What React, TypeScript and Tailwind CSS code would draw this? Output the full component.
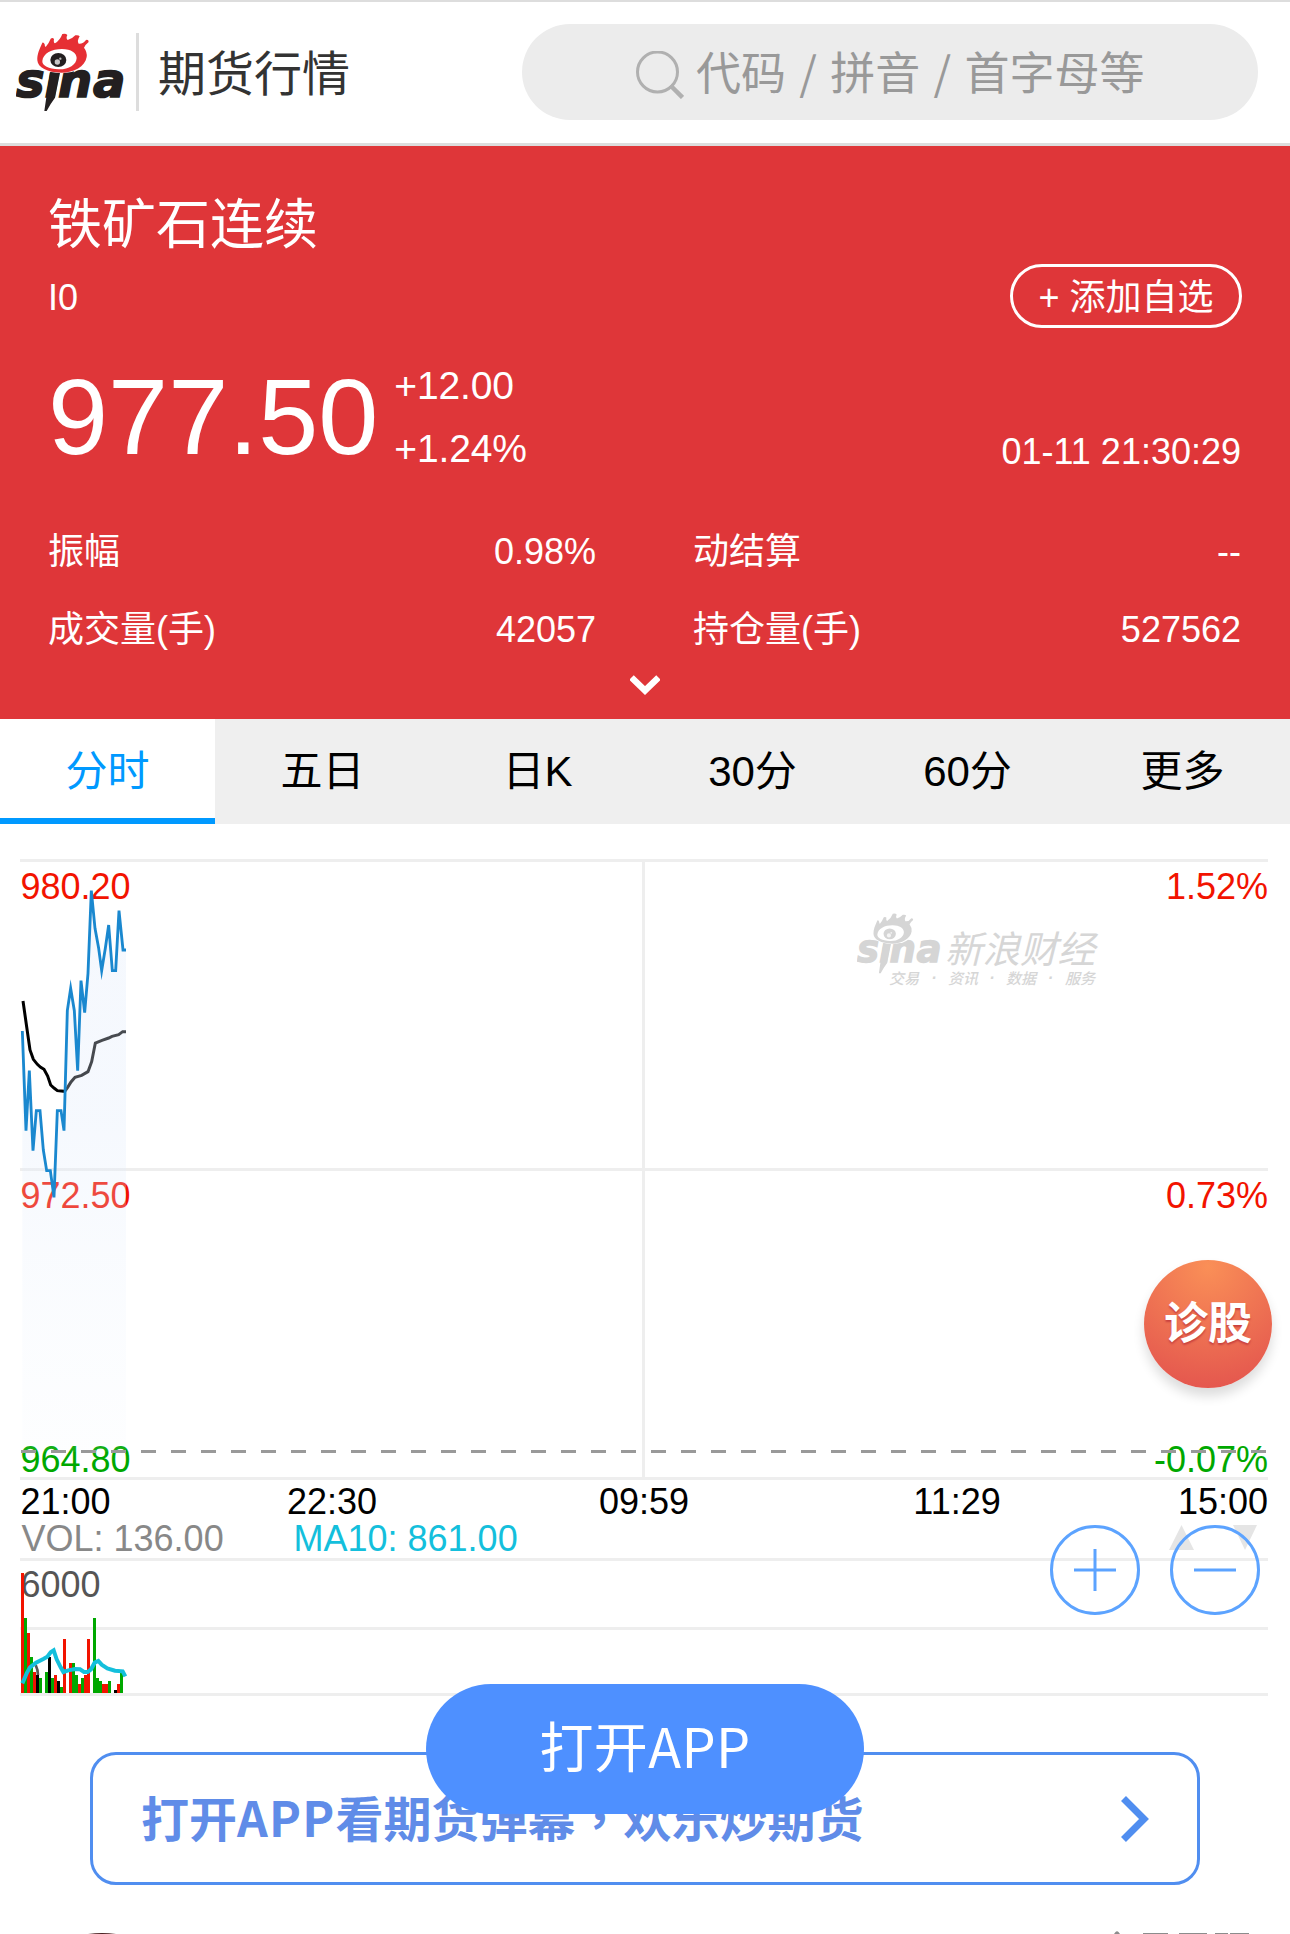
import React from "react";

const SANS = "font-['Liberation_Sans','Noto_Sans_CJK_SC',sans-serif]";

function SinaLogo({ ink, flame, className }: { ink: string; flame: string; className: string }) {
  return (
    <svg viewBox="48 96 330 237" className={className} aria-label="sina">
      <text
        y="287"
        fontSize="144"
        fontWeight="bold"
        fontStyle="italic"
        fontFamily="DejaVu Sans, sans-serif"
        fill={ink}
        stroke={ink}
        strokeWidth="5"
      >
        <tspan x="48">s</tspan>
        <tspan x="134" fontSize="132">i</tspan>
        <tspan x="174">n</tspan>
        <tspan x="279">a</tspan>
      </text>
      <path d="M150 214 L181 210 L165 290 Q150 310 140 330 L133 330 Z" fill={ink} />
      <ellipse cx="184" cy="173" rx="80" ry="43" fill="#fff" />
      <path
        fill={flame}
        d="M112 178 C111 160 118 145 127 125 Q131 123 134 130 Q134 138 137 138 Q146 128 152 113 Q158 109 162 114 Q160 126 165 127 Q180 118 187 99 Q197 96 202 102 Q197 112 203 117 Q216 114 226 103 Q235 101 239 106 Q230 120 236 128 Q250 129 258 117 Q266 115 266 123 Q257 130 252 140 Q262 153 260 168 C255 197 222 215 184 215 C142 215 113 199 112 178 Z"
      />
      <path d="M127 180 C129 157 156 144 186 144 C214 144 230 156 230 171 C229 192 205 206 176 205 C146 204 126 194 127 180 Z" fill="#fff" />
      <ellipse cx="175" cy="177" rx="24" ry="21" fill={ink} />
      <circle cx="172" cy="183" r="8" fill="#fff" fillOpacity="0.75" />
      <circle cx="181" cy="173" r="3.5" fill="#fff" fillOpacity="0.7" />
    </svg>
  );
}

function Header() {
  return (
    <header className="flex h-[146px] items-center border-t-2 border-b-[3px] border-[#dddddd] bg-white pl-4 pr-8 pb-px">
      <SinaLogo ink="#231f20" flame="#e62f34" className="h-[79px] w-[110px]" />
      <div className="ml-[10px] h-[78px] w-[3px] bg-[#dddddd]" />
      <h1 className="ml-[19px] pt-[5px] text-[48px] leading-[56px] text-[#333333]">期货行情</h1>
      <div className="ml-auto flex h-24 w-[736px] items-center rounded-full bg-[#ececec] pl-[114px]">
        <svg viewBox="0 0 48 48" className="mt-[5px] h-12 w-12" fill="none" stroke="#b0b0b0">
          <circle cx="21.5" cy="21" r="20" strokeWidth="3" />
          <path d="M34.500 34.500 L46.500 46.500" strokeWidth="4.500" />
        </svg>
        <span className="ml-3 whitespace-nowrap pb-[3px] font-['Noto_Sans_CJK_SC',sans-serif] text-[45px] leading-[56px] text-[#999999] [word-spacing:3.2px]">
          代码 / 拼音 / 首字母等
        </span>
      </div>
    </header>
  );
}

const stats = [
  ["振幅", "0.98%"],
  ["动结算", "--"],
  ["成交量(手)", "42057"],
  ["持仓量(手)", "527562"],
];

function Quote() {
  return (
    <section className="flex h-[573px] flex-col bg-[#df3639] px-12 text-white">
      <h2 className="mt-[46px] text-[54px] leading-[66px]">铁矿石连续</h2>
      <div className="mt-[6px] flex h-16 items-center justify-between">
        <span className="pt-[3px] text-[36px] leading-[40px]">I0</span>
        <button className="flex h-16 w-[232px] items-center justify-center rounded-full border-[3px] border-white pt-1 text-[36px] leading-[40px]">
          + 添加自选
        </button>
      </div>
      <div className="mt-[29px] flex h-[120px] items-center">
        <span className="text-[108px] leading-[120px]">977.50</span>
        <div className="ml-4 flex flex-col text-[39px] leading-[63px] tracking-[-0.15px]">
          <span>+12.00</span>
          <span>+1.24%</span>
        </div>
        <span className="ml-auto mt-[69px] pr-px text-[36px] leading-[40px]">01-11 21:30:29</span>
      </div>
      <div className="mt-[36px] grid grid-cols-2 gap-x-24 text-[36px] leading-[78px]">
        {stats.map(([label, value]) => (
          <div key={label} className="flex justify-between">
            <span>{label}</span>
            <span className="pr-px">{value}</span>
          </div>
        ))}
      </div>
      <svg viewBox="0 0 30 20" className="mt-[6px] h-5 w-[30px] self-center" fill="none" stroke="#fff" strokeWidth="6.500">
        <path d="M1.500 2.500 L15 15.500 L28.500 2.500" />
      </svg>
    </section>
  );
}

const tabs = ["分时", "五日", "日K", "30分", "60分", "更多"];

function Tabs() {
  return (
    <nav className="grid h-[105px] grid-cols-6 bg-[#efefef] text-center text-[42px] leading-[93px] text-black">
      {tabs.map((tab, i) => (
        <button
          key={tab}
          className={
            i === 0
              ? "border-b-[6px] border-[#0099ff] bg-white pt-[6px] text-[#0099ff]"
              : "border-b-[6px] border-[#efefef] pt-[6px]"
          }
        >
          {tab}
        </button>
      ))}
    </nav>
  );
}

const RED = "#f21300";
const GREEN = "#00a800";
const BLACK = "#000000";

// Price series in thirds of a pixel, measured from y = 840.
const price =
  "67,573 78,872 88,692 99,932 109,812 120,812 130,930 140,992 151,992 162,1072 172,812 183,812 192,872 202,512 212,445 223,512 233,692 243,422 254,518 264,400 274,152 285,265 296,325 305,392 316,325 326,255 337,392 347,392 357,212 369,330 378,330";
const average =
  "69,483 80,560 90,630 100,658 112,673 122,682 132,688 143,708 152,735 162,744 172,752 194,754 203,742 213,726 225,712 245,706 264,695 275,665 286,609 306,601 326,594 336,589 356,584 368,575 378,575";

// Volume bars: [slot, bar top, colour]; one slot is three pixels wide.
const bars: [number, number, string][] = [
  [0, 39, RED], [1, 174, GREEN], [2, 219, RED], [3, 291, GREEN], [4, 336, RED], [5, 345, BLACK], [6, 354, GREEN],
  [8, 336, GREEN], [9, 291, BLACK], [10, 354, GREEN], [11, 345, RED], [12, 363, BLACK], [13, 381, GREEN], [14, 237, RED],
  [16, 309, RED], [17, 309, GREEN], [18, 345, GREEN], [19, 372, RED], [20, 354, GREEN], [21, 345, RED], [22, 237, RED],
  [24, 174, GREEN], [25, 354, GREEN], [26, 363, GREEN], [27, 372, RED], [28, 372, RED], [29, 363, GREEN],
  [31, 390, BLACK], [32, 372, RED], [33, 336, GREEN],
];
const volumeAverage =
  "67,370 80,340 90,322 108,308 130,297 142,290 152,277 161,271 170,298 182,322 190,336 205,331 225,327 240,328 252,336 263,336 273,328 284,308 295,303 305,314 322,325 345,332 368,334 376,349";

function Chart() {
  return (
    <section className="relative h-[928px] bg-white">
      <svg viewBox="0 824 1290 928" className="block h-[928px] w-full" fontFamily="Liberation Sans, sans-serif" fontSize="36">
        <defs>
          <linearGradient id="area" x1="0" y1="0" x2="0" y2="1">
            <stop offset="0" stopColor="#e4edfb" stopOpacity="0.35" />
            <stop offset="0.4" stopColor="#dfeafb" stopOpacity="0.3" />
            <stop offset="1" stopColor="#e8f0fc" stopOpacity="0.08" />
          </linearGradient>
        </defs>
        <g fill="#eeeeee">
          <rect x="20" y="859" width="1248" height="3" />
          <rect x="20" y="1168" width="1248" height="3" />
          <rect x="20" y="1477" width="1248" height="3" />
          <rect x="642" y="859" width="3" height="620" />
          <rect x="20" y="1558" width="1248" height="3" />
          <rect x="20" y="1627" width="1248" height="3" />
          <rect x="20" y="1693" width="1248" height="3" />
        </g>
        <g fill="#f21300">
          <text x="20.500" y="898.500">980.20</text>
          <text x="20.500" y="1207.500">972.50</text>
          <text x="1268" y="898.500" textAnchor="end">1.52%</text>
          <text x="1268" y="1207.500" textAnchor="end">0.73%</text>
        </g>
        <g fill="#00a800">
          <text x="20.500" y="1471.500">964.80</text>
          <text x="1268" y="1471.500" textAnchor="end">-0.07%</text>
        </g>
        <g fill="#000">
          <text x="20.500" y="1513.500">21:00</text>
          <text x="287" y="1513.500">22:30</text>
          <text x="644" y="1513.500" textAnchor="middle">09:59</text>
          <text x="957" y="1513.500" textAnchor="middle">11:29</text>
          <text x="1268" y="1513.500" textAnchor="end">15:00</text>
        </g>
        <text x="21.500" y="1550.500" fill="#888888">VOL: 136.00</text>
        <text x="293.500" y="1550.500" fill="#14bfdc">MA10: 861.00</text>
        <text x="20.500" y="1597" fill="#555555">6000</text>

        <g transform="translate(0 840) scale(0.33333)" fill="none">
          <polyline points={average} stroke="#000" strokeWidth="9" />
          <polygon points={`${price} 378,1835 67,1835`} fill="url(#area)" />
          <polyline points={price} stroke="#1a88cf" strokeWidth="8.500" strokeLinejoin="miter" strokeMiterlimit="8" />
        </g>
        <path d="M21 1451.5 H1266" stroke="#999999" strokeWidth="3" strokeDasharray="15 15" />

        <g transform="translate(0 1560) scale(0.33333)">
          {bars.map(([slot, top, color]) => (
            <rect key={slot} x={63 + slot * 9} y={top} width="9" height={399 - top} fill={color} shapeRendering="crispEdges" />
          ))}
          <path d="M107 315 Q114 330 114 345" stroke="#555" strokeWidth="8" fill="none" />
          <polyline points={volumeAverage} stroke="#14bfdc" strokeWidth="12" fill="none" />
        </g>

        <g fill="#e5e5e5">
          <path d="M1169 1550 L1181.5 1525 L1194 1550 Z" />
          <path d="M1233 1525 H1257 L1245 1550 Z" />
        </g>

        <g fill="#d6d6d6" fontStyle="italic" fontFamily="Noto Sans CJK SC, sans-serif">
          <text x="945" y="963" fontSize="37.500">新浪财经</text>
          <g fontSize="15" fontWeight="500">
            <text x="889" y="983.500">交易</text>
            <text x="948" y="983.500">资讯</text>
            <text x="1006" y="983.500">数据</text>
            <text x="1065" y="983.500">服务</text>
          </g>
          <g fontSize="16" fontWeight="700" fontFamily="Liberation Sans, sans-serif" textAnchor="middle">
            <text x="934" y="983">·</text>
            <text x="992" y="983">·</text>
            <text x="1050.500" y="983">·</text>
          </g>
        </g>
      </svg>
      <SinaLogo ink="#d5d5d5" flame="#d5d5d5" className="absolute top-[88px] left-[857px] h-[63px] w-[85px]" />

      <button className="absolute top-[436px] left-[1144px] flex h-32 w-32 items-center justify-center rounded-full bg-[radial-gradient(circle_at_50%_5%,#fa8f57_0%,#ed6f52_52%,#e2504d_100%)] text-[44px] leading-[50px] font-bold text-white shadow-[0_8px_12px_rgba(0,0,0,0.14)] [text-shadow:0_2px_2px_#c8413f]">
        诊股
      </button>

      <div className="absolute top-[701px] left-[1050px] flex gap-[30px]">
        {["M24 45 H66 M45 24 V66", "M24 45 H66"].map((d) => (
          <button key={d} className="h-[90px] w-[90px]">
            <svg viewBox="0 0 90 90" fill="none" stroke="#5ca3ff" strokeWidth="3">
              <circle cx="45" cy="45" r="43.5" />
              <path d={d} />
            </svg>
          </button>
        ))}
      </div>
    </section>
  );
}

function AppBanner() {
  return (
    <section className="px-[90px]">
      <a className="flex h-[133px] items-center justify-between rounded-[26px] border-[3px] border-[#508ef0] pl-12 pr-12 text-[#608ce8]">
        <span className="whitespace-nowrap pb-[6px] font-['Noto_Sans_CJK_SC',sans-serif] text-[48px] leading-[60px] font-bold">
          打开<span className="tracking-[1.2px]">APP</span>看期货弹幕
          <span className="font-['Noto_Sans_CJK_TC',sans-serif]" lang="zh-Hant">
            ，
          </span>
          欢乐炒期货
        </span>
        <svg viewBox="0 0 28 46" className="h-[46px] w-7" fill="none" stroke="#508ef0" strokeWidth="7">
          <path d="M2.5 2.5 L23 23 L2.5 43.5" />
        </svg>
      </a>
    </section>
  );
}

// Top edge of the first comment row, cut off by the end of the viewport.
function CommentEdge() {
  return (
    <div className="mt-[45px] h-1 overflow-hidden">
      <svg viewBox="0 0 1290 4" className="block h-1 w-full">
        <path d="M88 4 Q102 2 116 4 Z" fill="#4a2020" />
        <g fill="#8c8c8c">
          <path d="M1114 4 L1115.500 2 Q1117 0.5 1118.500 2 L1120 4 Z" />
          <rect x="1143" y="3" width="25" height="1" />
          <rect x="1179" y="3" width="28" height="1" />
          <rect x="1215" y="3" width="13" height="1" />
          <rect x="1230" y="3" width="19" height="1" />
        </g>
      </svg>
    </div>
  );
}

export default function App() {
  return (
    <main className={`relative h-[1934px] w-[1290px] overflow-hidden bg-white ${SANS}`} lang="zh-CN">
      <Header />
      <Quote />
      <Tabs />
      <Chart />
      <AppBanner />
      <CommentEdge />
      <button className="absolute top-[1684px] left-[426px] h-[130px] w-[438px] rounded-full bg-[#4e90ff] pb-2 font-['Noto_Sans_CJK_SC',sans-serif] text-[54px] leading-[64px] tracking-[0.4px] text-white">
        打开APP
      </button>
    </main>
  );
}
